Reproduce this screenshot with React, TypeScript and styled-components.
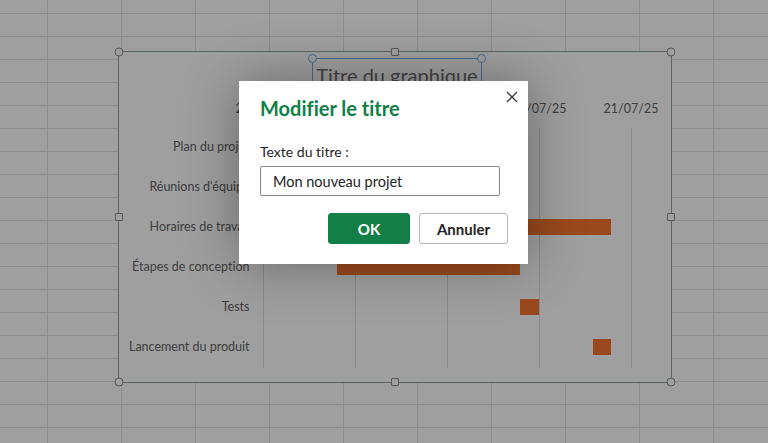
import styled, { createGlobalStyle } from "styled-components";

const GlobalStyle = createGlobalStyle`
  html, body {
    margin: 0;
    padding: 0;
    background: #ffffff;
  }
  body {
    font-family: Lato, "Noto Sans", sans-serif;
    font-variant-ligatures: none;
  }
`;

const tasks = [
  { name: "Plan du projet", start: 0, end: 46 },
  { name: "Réunions d'équipe", start: 46, end: 140 },
  { name: "Horaires de travail", start: 130, end: 348 },
  { name: "Étapes de conception", start: 74, end: 257 },
  { name: "Tests", start: 257, end: 276 },
  { name: "Lancement du produit", start: 330, end: 348 },
];

const dates = ["23/06/25", "30/06/25", "07/07/25", "14/07/25", "21/07/25"];

const handles: { x: string; y: string; round?: boolean }[] = [
  { x: "0%", y: "0%", round: true },
  { x: "50%", y: "0%" },
  { x: "100%", y: "0%", round: true },
  { x: "0%", y: "50%" },
  { x: "100%", y: "50%" },
  { x: "0%", y: "100%", round: true },
  { x: "50%", y: "100%" },
  { x: "100%", y: "100%", round: true },
];

const STEP = 92;
const ROW = 40;
const TOP = 32;

export default function App() {
  return (
    <>
      <GlobalStyle />
      <Sheet>
        <Chart>
          <TitleRow>
            <TitleBox>
              Titre du graphique
              <TitleHandle $side="left" />
              <TitleHandle $side="right" />
            </TitleBox>
          </TitleRow>
          <ChartBody>
            <Labels>
              {tasks.map((t) => (
                <Label key={t.name}>{t.name}</Label>
              ))}
            </Labels>
            <svg width="400" height="280" viewBox="0 0 400 280" overflow="visible">
              {dates.map((d, i) => (
                <g key={d}>
                  <text
                    x={i * STEP}
                    y={17}
                    textAnchor="middle"
                    fontSize="12.5"
                    fill="#666666"
                    fontFamily="Lato, sans-serif"
                  >
                    {d}
                  </text>
                  <line
                    x1={i * STEP + 0.5}
                    x2={i * STEP + 0.5}
                    y1={TOP}
                    y2={TOP + ROW * 6}
                    stroke="#dadada"
                    strokeWidth="1"
                  />
                </g>
              ))}
              {tasks.map((t, i) => (
                <rect
                  key={t.name}
                  x={t.start}
                  y={TOP + i * ROW + 11}
                  width={t.end - t.start}
                  height={16}
                  fill="#f5762f"
                />
              ))}
            </svg>
          </ChartBody>
          {handles.map((h) => (
            <Handle key={h.x + h.y} $x={h.x} $y={h.y} $round={h.round} />
          ))}
        </Chart>
        <Overlay>
          <Dialog role="dialog" aria-labelledby="dlg-title">
            <Header>
              <DialogTitle id="dlg-title">Modifier le titre</DialogTitle>
              <CloseButton aria-label="Fermer">
                <svg width="12" height="12" viewBox="0 0 12 12">
                  <path d="M1 1 L11 11 M11 1 L1 11" stroke="#3b3b3b" strokeWidth="1.3" fill="none" />
                </svg>
              </CloseButton>
            </Header>
            <FieldLabel htmlFor="titre">Texte du titre :</FieldLabel>
            <TextInput id="titre" defaultValue="Mon nouveau projet" />
            <Buttons>
              <Button $primary>OK</Button>
              <Button>Annuler</Button>
            </Buttons>
          </Dialog>
        </Overlay>
      </Sheet>
    </>
  );
}

const Sheet = styled.div`
  position: relative;
  width: 768px;
  height: 443px;
  box-sizing: border-box;
  padding: 51px 0 0 118px;
  overflow: hidden;
  background-color: #ffffff;
  background-image: linear-gradient(to right, #e3e3e3 1px, transparent 1px),
    linear-gradient(to bottom, #e3e3e3 1px, transparent 1px);
  background-size: 74px 23px;
  background-position: 47px 13px;
`;

const Chart = styled.div`
  position: relative;
  width: 554px;
  height: 332px;
  box-sizing: border-box;
  border: 1.5px solid #8fa698;
  background: #ffffff;
  display: flex;
  flex-direction: column;
`;

const TitleRow = styled.div`
  height: 43.5px;
  display: flex;
  justify-content: center;
  padding: 5.5px 0 0 4px;
  box-sizing: border-box;
`;

const TitleBox = styled.div`
  position: relative;
  height: 36px;
  box-sizing: border-box;
  padding: 2px 3px 0;
  border: 1.5px solid #72aee6;
  font-size: 20px;
  line-height: 28px;
  color: #6e6e6e;
  white-space: nowrap;
`;

const TitleHandle = styled.span<{ $side: "left" | "right" }>`
  position: absolute;
  top: -5px;
  ${(p) => (p.$side === "left" ? "left: -5px;" : "right: -5px;")}
  width: 7px;
  height: 7px;
  border-radius: 50%;
  border: 1.5px solid #72aee6;
  background: #ffffff;
`;

const ChartBody = styled.div`
  display: flex;
`;

const Labels = styled.div`
  width: 143.5px;
  box-sizing: border-box;
  padding: 32px 13px 0 0;
  display: flex;
  flex-direction: column;
`;

const Label = styled.div`
  height: 40px;
  display: flex;
  align-items: center;
  justify-content: flex-end;
  padding-bottom: 3px;
  box-sizing: border-box;
  font-size: 12.5px;
  color: #666666;
  white-space: nowrap;
`;

const Handle = styled.span<{ $x: string; $y: string; $round?: boolean }>`
  position: absolute;
  left: ${(p) => p.$x};
  top: ${(p) => p.$y};
  transform: translate(-50%, -50%);
  width: ${(p) => (p.$round ? "7px" : "6px")};
  height: ${(p) => (p.$round ? "7px" : "6px")};
  border: 1.5px solid #8c8c8c;
  border-radius: ${(p) => (p.$round ? "50%" : "1px")};
  background: #ffffff;
`;

const Overlay = styled.div`
  position: absolute;
  inset: 0;
  box-sizing: border-box;
  padding-top: 81px;
  background: rgba(0, 0, 0, 0.375);
  display: flex;
  justify-content: center;
  align-items: flex-start;
`;

const Dialog = styled.div`
  width: 289px;
  height: 183px;
  margin-left: -1px;
  box-sizing: border-box;
  padding: 12px 8px 20px 21px;
  background: #ffffff;
  box-shadow: 0 0 50px rgba(0, 0, 0, 0.35);
  display: flex;
  flex-direction: column;
`;

const Header = styled.div`
  display: flex;
  justify-content: space-between;
  align-items: flex-start;
`;

const DialogTitle = styled.h2`
  margin: 2px 0 0;
  font-size: 20px;
  line-height: 26px;
  font-weight: 700;
  color: #137f46;
`;

const CloseButton = styled.button`
  width: 16px;
  height: 16px;
  margin-top: -4px;
  padding: 0;
  border: none;
  background: none;
  display: flex;
  align-items: center;
  justify-content: center;
  cursor: pointer;
`;

const FieldLabel = styled.label`
  margin-top: 21px;
  font-size: 14px;
  line-height: 20px;
  color: #242424;
`;

const TextInput = styled.input`
  margin-top: 4px;
  width: 240px;
  height: 31px;
  box-sizing: border-box;
  padding: 0 12px;
  border: 1px solid #8a8a8a;
  border-radius: 2px;
  font-family: Lato, "Noto Sans", sans-serif;
  font-size: 14.5px;
  color: #242424;
  outline: none;
`;

const Buttons = styled.div`
  margin-top: 17px;
  padding-right: 12px;
  display: flex;
  justify-content: flex-end;
  gap: 9px;
`;

const Button = styled.button<{ $primary?: boolean }>`
  height: 31px;
  min-width: ${(p) => (p.$primary ? "82px" : "89px")};
  box-sizing: border-box;
  border-radius: 3px;
  border: 1px solid ${(p) => (p.$primary ? "#137f46" : "#b5b5b5")};
  background: ${(p) => (p.$primary ? "#137f46" : "#ffffff")};
  color: ${(p) => (p.$primary ? "#ffffff" : "#242424")};
  font-family: Lato, "Noto Sans", sans-serif;
  font-size: 15px;
  font-weight: 700;
  cursor: pointer;
`;
